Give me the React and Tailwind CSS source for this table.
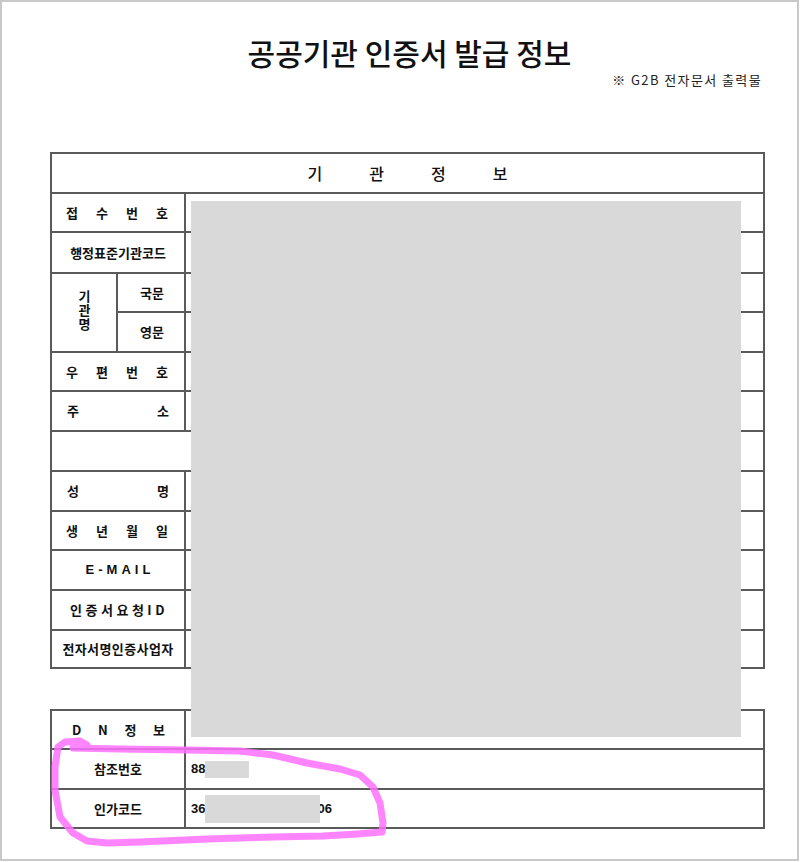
import React from "react";

const LINE = "border-[#5a5a5a]";
const KR = { fontFamily: "'Noto Sans CJK KR', 'Noto Sans', sans-serif" };
const NUM = { fontFamily: "'Liberation Sans', Arial, sans-serif" };

function Spread({ text, className = "pl-[14px] pr-[16px]" }) {
  return (
    <div className={`flex h-full w-full items-center justify-between ${className}`}>
      {text.split("").map((c, i) => (
        <span key={i}>{c}</span>
      ))}
    </div>
  );
}

function Center({ children, className = "" }) {
  return (
    <div className={`flex h-full w-full items-center justify-center ${className}`}>
      {children}
    </div>
  );
}

function Row({ h, label, children }) {
  return (
    <div className={`flex border-t-2 ${LINE} ${h}`}>
      <div className={`w-[134px] shrink-0 border-r-2 ${LINE}`}>{label}</div>
      <div className="flex flex-1 items-center pl-[5px]">{children}</div>
    </div>
  );
}

function OrgTable() {
  return (
    <div className={`w-[715px] border-2 ${LINE} text-[13px] font-bold text-[#111]`}>
      {/* header */}
      <div className="flex h-[38px] items-center justify-center gap-[47px] text-[16px] font-medium">
        <span>기</span>
        <span>관</span>
        <span>정</span>
        <span>보</span>
      </div>

      <Row h="h-[39px]" label={<Spread text="접수번호" />} />
      <Row h="h-[41px]" label={<Center>행정표준기관코드</Center>} />

      {/* 기관명 : merged cell */}
      <div className={`flex h-[79px] border-t-2 ${LINE}`}>
        <div
          className={`flex w-[66px] shrink-0 items-center justify-center border-r-2 ${LINE} pb-[3px]`}
        >
          <span className="leading-[14px] tracking-[1px] [text-orientation:upright] [writing-mode:vertical-rl]">
            기관명
          </span>
        </div>
        <div className="flex flex-1 flex-col">
          <div className="flex h-[37px]">
            <div className={`w-[68px] shrink-0 border-r-2 ${LINE}`}>
              <Center className="pl-[2px]">국문</Center>
            </div>
            <div className="flex-1" />
          </div>
          <div className={`flex h-[40px] border-t-2 ${LINE}`}>
            <div className={`w-[68px] shrink-0 border-r-2 ${LINE}`}>
              <Center className="pl-[2px]">영문</Center>
            </div>
            <div className="flex-1" />
          </div>
        </div>
      </div>

      <Row h="h-[39px]" label={<Spread text="우편번호" />} />
      <Row h="h-[40px]" label={<Spread text="주소" className="pl-[15px] pr-[15px]" />} />
      <div className={`h-[40px] border-t-2 ${LINE}`} />
      <Row h="h-[40px]" label={<Spread text="성명" className="pl-[15px] pr-[15px]" />} />
      <Row h="h-[39px]" label={<Spread text="생년월일" />} />
      <Row
        h="h-[40px]"
        label={
          <Center className="pl-[4px] tracking-[4px]">
            <span style={NUM}>E-MAIL</span>
          </Center>
        }
      />
      <Row
        h="h-[40px]"
        label={<Center className="pl-[2px] tracking-[3.5px]">인증서요청ID</Center>}
      />
      <Row
        h="h-[38px]"
        label={<Center className="tracking-[0.4px]">전자서명인증사업자</Center>}
      />
    </div>
  );
}

function DnTable() {
  return (
    <div className={`w-[715px] border-2 ${LINE} text-[13px] font-bold text-[#111]`}>
      <div className="flex h-[37px]">
        <div className={`w-[134px] shrink-0 border-r-2 ${LINE}`}>
          <Spread text="DN정보" className="pl-[20px] pr-[19px]" />
        </div>
        <div className="flex-1" />
      </div>
      <Row h="h-[40px]" label={<Center>참조번호</Center>}>
        <span style={NUM} className="text-[13px]">
          88
        </span>
        <span className="h-[17px] w-[44px] bg-[#d9d9d9]" />
      </Row>
      <Row h="h-[39px]" label={<Center>인가코드</Center>}>
        <span style={NUM} className="text-[13px]">
          36
        </span>
        <span className="relative z-10 h-[28px] w-[115px] bg-[#d9d9d9]" />
        <span style={NUM} className="-ml-[3px] text-[13px]">
          06
        </span>
      </Row>
    </div>
  );
}

export default function App() {
  return (
    <div className="relative h-[862px] w-[800px] bg-white" style={KR}>
      <div className="h-[861px] w-[799px] border-2 border-[#c9c9c9]">
        <div className="pl-[20px] pt-[33px] text-center text-[30px] font-medium leading-[34px] text-[#111]">
          공공기관 인증서 발급 정보
        </div>
        <div className="mt-[3px] pr-[35px] text-right text-[13px] leading-[16px] tracking-[1.4px] text-[#222]">
          ※ G2B 전자문서 출력물
        </div>

        <div className="ml-[48px] mt-[64px]">
          <OrgTable />
        </div>
        <div className="ml-[48px] mt-[40px]">
          <DnTable />
        </div>
      </div>

      {/* redaction */}
      <div className="absolute left-[191px] top-[201px] h-[536px] w-[550px] bg-[#d9d9d9]" />

      {/* highlighter scribble */}
      <svg
        className="pointer-events-none absolute left-0 top-0"
        width="800"
        height="862"
        viewBox="0 0 800 862"
      >
        <path
          d="M87 745 L80 741 L65 742 L58 747 L55 767 L55 790 L60 817 L73 833 L87 841 L107 843 L140 842 L207 839 L273 837 L323 836 L357 834 L382 832 L383 823 L380 803 L373 787 L360 775 L340 769 L307 763 L273 755 L240 751 L187 750 L120 749 L73 748"
          fill="none"
          stroke="#ff70ff"
          strokeOpacity="0.85"
          strokeWidth="7"
          strokeLinejoin="round"
          strokeLinecap="round"
        />
      </svg>
    </div>
  );
}
